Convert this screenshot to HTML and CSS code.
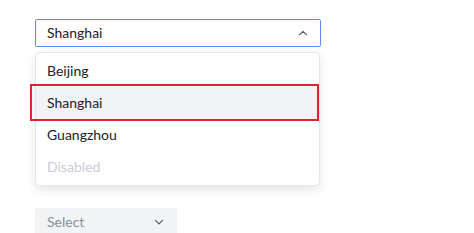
FILE: index.html
```html
<!DOCTYPE html>
<html>
<head>
  <meta charset="UTF-8">
  <title>Select</title>
  <link rel="stylesheet" href="styles.css">
</head>
<body>
  <div class="container">
    <div class="select open">
      <span class="select-value">Shanghai</span>
      <svg class="select-arrow" viewBox="0 0 12 12">
        <path d="M2.5 7.8 6 4.3 9.5 7.8"/>
      </svg>
    </div>

    <div class="popup">
      <div class="option">Beijing</div>
      <div class="option active">Shanghai</div>
      <div class="option">Guangzhou</div>
      <div class="option disabled">Disabled</div>
      <span class="marker"></span>
    </div>

    <div class="select filled">
      <span class="select-value placeholder">Select</span>
      <svg class="select-arrow" viewBox="0 0 12 12">
        <path d="M2.5 4.3 6 7.8 9.5 4.3"/>
      </svg>
    </div>
  </div>
</body>
</html>
```

FILE: styles.css
```css
:root {
  --primary: #5b8ff2;
  --text: #1d2129;
  --text-secondary: #86909c;
  --text-disabled: #c9cdd4;
  --fill: #f2f3f5;
  --border: #e5e6eb;
  --danger: #e0232e;
}

body {
  margin: 0;
  font-family: Lato, "Noto Sans", sans-serif;
  font-size: 14px;
  color: var(--text);
  background: #fff;
}

.container {
  display: flex;
  flex-direction: column;
  align-items: flex-start;
  padding: 19px 0 0 35px;
}

.select {
  box-sizing: border-box;
  height: 28px;
  display: flex;
  align-items: center;
  justify-content: space-between;
  padding: 0 11px;
  border-radius: 2px;
}

.select.open {
  width: 286px;
  border: 1px solid var(--primary);
  background: #fff;
}

.select.filled {
  width: 142px;
  margin-top: 22px;
  background: var(--fill);
  border: 1px solid transparent;
}

.select-value {
  line-height: 26px;
}

.select-value.placeholder {
  color: var(--text-secondary);
}

.select-arrow {
  width: 12px;
  height: 12px;
  fill: none;
  stroke: #4e5969;
  stroke-width: 1.2;
  stroke-linecap: round;
  stroke-linejoin: round;
}

.popup {
  position: relative;
  box-sizing: border-box;
  width: 285px;
  margin-top: 5px;
  padding: 2px 0;
  border: 1px solid var(--border);
  border-radius: 4px;
  background: #fff;
  box-shadow: 0 4px 10px rgba(0, 0, 0, 0.1);
}

.option {
  height: 32px;
  line-height: 32px;
  padding: 0 11px;
}

.option.active {
  background: var(--fill);
}

.option.disabled {
  color: var(--text-disabled);
}

.marker {
  position: absolute;
  left: -6px;
  top: 31px;
  width: 285px;
  height: 33px;
  border: 2px solid var(--danger);
}
```
